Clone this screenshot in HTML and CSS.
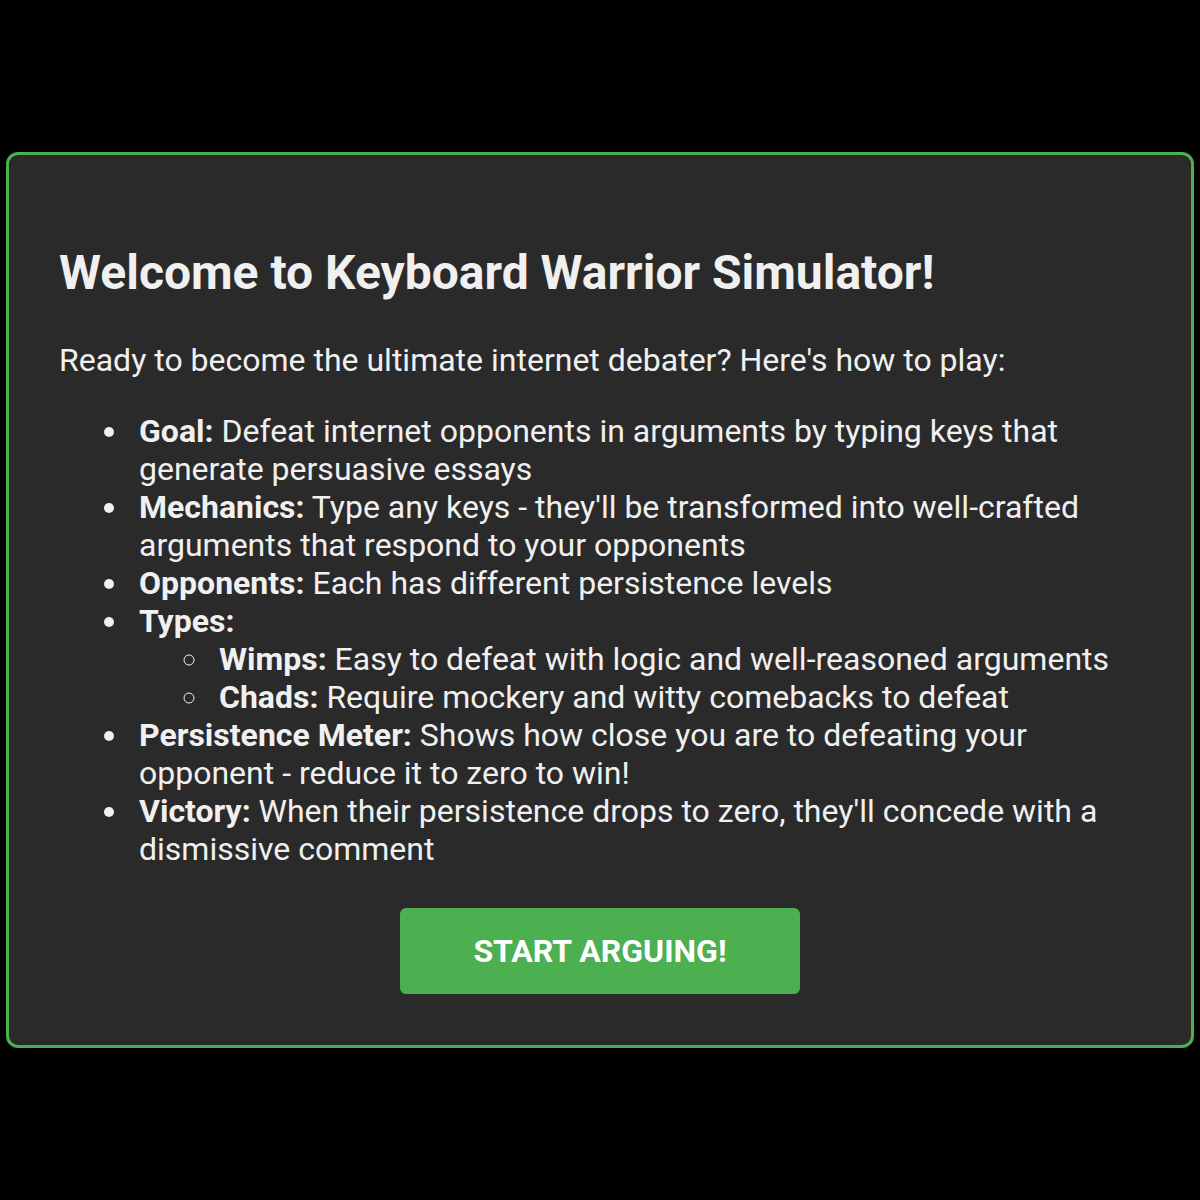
FILE: index.html
```html
<!DOCTYPE html>
<html lang="en">
<head>
    <meta charset="UTF-8">
    <meta name="viewport" content="width=device-width, initial-scale=1.0">
    <title>Keyboard Warrior Simulator</title>
    <link rel="stylesheet" href="styles.css">
</head>
<body>
    <div class="intro-card">
        <h1>Welcome to Keyboard Warrior Simulator!</h1>
        <p>Ready to become the ultimate internet debater? Here's how to play:</p>
        <ul class="rules">
            <li><strong>Goal:</strong> Defeat internet opponents in arguments by typing keys that generate persuasive essays</li>
            <li><strong>Mechanics:</strong> Type any keys - they'll be transformed into well-crafted arguments that respond to your opponents</li>
            <li><strong>Opponents:</strong> Each has different persistence levels</li>
            <li><strong>Types:</strong>
                <ul>
                    <li><strong>Wimps:</strong> Easy to defeat with logic and well-reasoned arguments</li>
                    <li><strong>Chads:</strong> Require mockery and witty comebacks to defeat</li>
                </ul>
            </li>
            <li><strong>Persistence Meter:</strong> Shows how close you are to defeating your opponent - reduce it to zero to win!</li>
            <li><strong>Victory:</strong> When their persistence drops to zero, they'll concede with a dismissive comment</li>
        </ul>
        <div class="actions">
            <button id="start">START ARGUING!</button>
        </div>
    </div>
</body>
</html>
```

FILE: styles.css
```css
body {
    margin: 0;
    min-height: 1200px;
    display: flex;
    align-items: center;
    justify-content: center;
    background-color: #000;
    font-family: 'Roboto', 'Liberation Sans', sans-serif;
    color: #f0f0f0;
}
.intro-card {
    width: 1188px;
    box-sizing: border-box;
    padding: 50px 50px 51px;
    background-color: #2a2a2a;
    border: 3px solid #4caf50;
    border-radius: 12px;
}
h1 {
    margin: 40px 0 0;
    font-size: 48px;
    font-weight: bold;
    line-height: 56px;
}
p {
    margin: 40px 0 0;
    font-size: 32px;
    line-height: 38px;
}
.rules {
    margin: 33px 0 0;
    padding-left: 72px;
    font-size: 32px;
    line-height: 38px;
}
.rules li {
    padding-left: 8px;
}
.rules ul {
    margin: 0;
    padding-left: 72px;
    list-style-type: circle;
}
.actions {
    margin-top: 40px;
    display: flex;
    justify-content: center;
}
button {
    width: 400px;
    height: 86px;
    background-color: #4caf50;
    color: white;
    border: none;
    border-radius: 6px;
    font-family: 'Roboto', 'Liberation Sans', sans-serif;
    font-size: 32px;
    font-weight: bold;
    cursor: pointer;
}
button:hover {
    background-color: #45a049;
}
```
